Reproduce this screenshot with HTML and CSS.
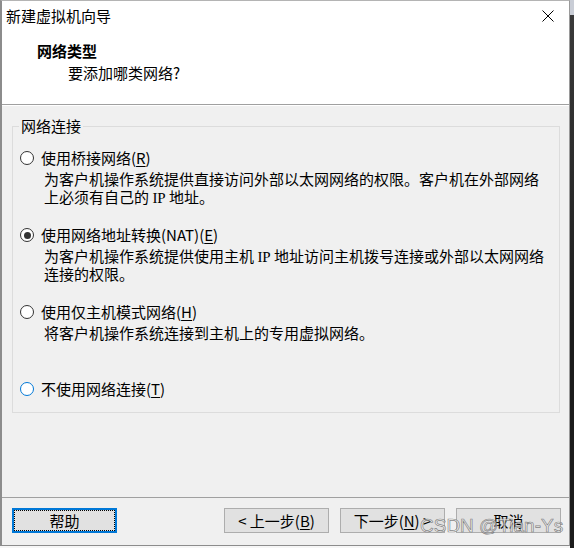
FILE: index.html
```html
<!DOCTYPE html>
<html lang="zh-CN">
<head>
  <meta charset="UTF-8" />
  <title>新建虚拟机向导</title>
  <link rel="stylesheet" href="styles.css">
</head>
<body>
  <div class="desktop">
    <div class="window">
      <div class="titlebar">
        <span class="title">新建虚拟机向导</span>
        <svg class="close" width="12" height="12" viewBox="0 0 12 12">
          <path d="M0.5 0.5 L11.5 11.5 M11.5 0.5 L0.5 11.5" stroke="#000" stroke-width="1" fill="none" />
        </svg>
      </div>

      <div class="header">
        <div class="header-title">网络类型</div>
        <div class="header-sub">要添加哪类网络?</div>
      </div>

      <div class="content">
        <fieldset class="group">
          <legend>网络连接</legend>

          <div class="option">
            <div class="option-label"><span class="radio"></span>使用桥接网络(<u>R</u>)</div>
            <div class="option-desc">为客户机操作系统提供直接访问外部以太网网络的权限。客户机在外部网络<br>上必须有自己的 <span class="latin">IP</span> 地址。</div>
          </div>

          <div class="option">
            <div class="option-label"><span class="radio checked"></span>使用网络地址转换(NAT)(<u>E</u>)</div>
            <div class="option-desc">为客户机操作系统提供使用主机 <span class="latin">IP</span> 地址访问主机拨号连接或外部以太网网络<br>连接的权限。</div>
          </div>

          <div class="option">
            <div class="option-label"><span class="radio"></span>使用仅主机模式网络(<u>H</u>)</div>
            <div class="option-desc">将客户机操作系统连接到主机上的专用虚拟网络。</div>
          </div>

          <div class="option last">
            <div class="option-label"><span class="radio focus"></span>不使用网络连接(<u>T</u>)</div>
          </div>
        </fieldset>
      </div>

      <div class="footer">
        <button class="btn btn-focus">帮助</button>
        <div class="spacer"></div>
        <button class="btn">&lt; 上一步(<u>B</u>)</button>
        <button class="btn">下一步(<u>N</u>) &gt;</button>
        <button class="btn">取消</button>
      </div>

      <div class="watermark">CSDN @Tian-Ys</div>
    </div>
    <div class="edge"></div>
  </div>
</body>
</html>
```

FILE: styles.css
```css
body {
  margin: 0;
  padding: 0;
  background: #f6f6f6;
  font-family: "Noto Sans CJK SC", "Noto Sans", sans-serif;
  font-size: 15px;
  color: #000;
}
.desktop {
  display: flex;
  width: 574px;
  height: 548px;
  overflow: hidden;
}
.window {
  position: relative;
  box-sizing: border-box;
  width: 570px;
  height: 546px;
  display: flex;
  flex-direction: column;
  background: #f0f0f0;
  border-left: 2px solid #8c8c8c;
  border-right: 1px solid #9a9a9a;
  border-top: 1px solid #b4b4b4;
  border-bottom: 1px solid #8c8c8c;
}
.edge {
  flex: 1;
  background: linear-gradient(#c9cdd6 0, #c9cdd6 15px, #3a3a3a 15px, #1c1c1c 60%);
}
.titlebar {
  height: 29px;
  background: #fff;
  display: flex;
  align-items: center;
  padding: 0 15px 0 4px;
}
.title {
  flex: 1;
  line-height: 20px;
}
.close {
  display: block;
  margin-top: 1px;
}
.header {
  height: 75px;
  background: #fff;
  border-bottom: 1px solid #a0a0a0;
  padding: 11px 0 0 35px;
  box-sizing: border-box;
}
.header-title {
  font-weight: bold;
  line-height: 20px;
}
.header-sub {
  line-height: 20px;
  margin-top: 2px;
  padding-left: 31px;
}
.content {
  flex: 1;
  border-top: 1px solid #fff;
}
.group {
  margin: 10px 9px 0 10px;
  padding: 12px 0 13px 7px;
  border: 1px solid #dcdcdc;
}
.group legend {
  padding: 0 2px;
  margin-left: -1px;
  line-height: 20px;
}
.option {
  margin-bottom: 19px;
}
.option.last {
  margin-bottom: 0;
}
.option-label {
  display: flex;
  align-items: center;
  height: 20px;
  line-height: 20px;
}
.radio {
  width: 12px;
  height: 12px;
  border: 1px solid #333;
  border-radius: 50%;
  background: #fff;
  margin-right: 7px;
  position: relative;
  flex-shrink: 0;
}
.radio.checked::after {
  content: "";
  position: absolute;
  left: 2.5px;
  top: 2.5px;
  width: 7px;
  height: 7px;
  border-radius: 50%;
  background: #333;
}
.radio.focus {
  border-color: #0078d7;
}
.option-desc {
  margin-top: 2px;
  min-height: 36px;
  line-height: 18px;
  padding-left: 24px;
}
.latin {
  font-family: "Liberation Serif", serif;
  line-height: 1;
}
u {
  text-underline-offset: 2px;
}
.footer {
  height: 48px;
  border-top: 1px solid #a0a0a0;
  display: flex;
  align-items: flex-start;
  gap: 11px;
  padding: 10px 0 0 10px;
  box-sizing: border-box;
}
.spacer {
  flex: 1;
}
.btn {
  width: 105px;
  height: 25px;
  margin: 0;
  padding: 0;
  font-family: inherit;
  font-size: 15px;
  line-height: 20px;
  color: #000;
  background: #e1e1e1;
  border: 1px solid #adadad;
  border-radius: 0;
}
.btn:last-child {
  margin-right: 8px;
}
.btn-focus {
  border: 2px solid #0078d7;
  outline: 1px dotted #000;
  outline-offset: -3px;
}
.watermark {
  position: absolute;
  left: 418px;
  top: 514px;
  font-family: "Liberation Sans", Arial, sans-serif;
  font-size: 19px;
  color: rgba(255, 255, 255, 0.7);
  -webkit-text-stroke: 0.7px rgba(110, 110, 110, 0.85);
  white-space: nowrap;
}
```
